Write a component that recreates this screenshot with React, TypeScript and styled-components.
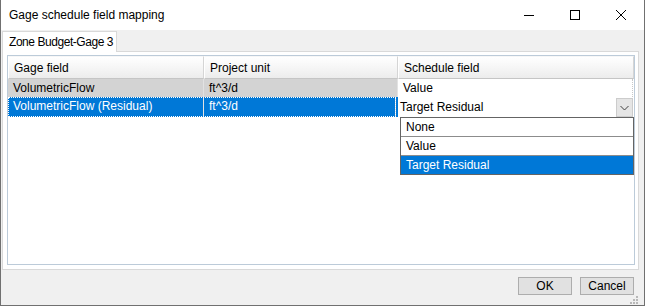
import styled, { createGlobalStyle } from "styled-components";

const GlobalStyle = createGlobalStyle`
  html, body {
    margin: 0;
    padding: 0;
    background: #ffffff;
  }
  * {
    box-sizing: border-box;
  }
`;

const Window = styled.div`
  position: relative;
  width: 645px;
  height: 306px;
  display: flex;
  flex-direction: column;
  border: 1px solid #707070;
  border-top: none;
  background: #f0f0f0;
  font-family: "Liberation Sans", Arial, sans-serif;
  font-size: 12px;
  color: #000;
`;

const TitleBar = styled.div`
  height: 30px;
  display: flex;
  align-items: center;
  background: #ffffff;
`;

const Title = styled.div`
  flex: 1;
  padding-left: 8px;
  padding-bottom: 1px;
`;

const CaptionButton = styled.div`
  width: 46px;
  height: 30px;
  display: flex;
  align-items: center;
  justify-content: center;
`;

const Body = styled.div`
  flex: 1;
  display: flex;
  flex-direction: column;
  padding: 1px 5px 0 1px;
`;

const TabStrip = styled.div`
  height: 20px;
  display: flex;
`;

const Tab = styled.div`
  width: 115px;
  height: 21px;
  padding: 3px 0 0 6px;
  background: #ffffff;
  border: 1px solid #d9d9d9;
  border-bottom: none;
  position: relative;
  z-index: 1;
  white-space: nowrap;
  letter-spacing: -0.45px;
`;

const TabPage = styled.div`
  height: 219px;
  background: #ffffff;
  border: 1px solid #d9d9d9;
  padding: 3px 3px 4px 4px;
`;

const Grid = styled.div`
  position: relative;
  width: 628px;
  height: 210px;
  border: 1px solid #bccbd9;
  background: #ffffff;
`;

const Row = styled.div<{ $height: number }>`
  display: flex;
  height: ${(p) => p.$height}px;
`;

const HeaderCell = styled.div<{ $width: number }>`
  width: ${(p) => p.$width}px;
  padding: 4px 0 0 5px;
  background: linear-gradient(#ffffff, #f4f4f4 60%, #ececec);
  border-top: 1px solid #f7f7f7;
  border-right: 1px solid #d5d5d5;
  border-bottom: 1px solid #c5c5c5;
  border-left: 1px solid #ffffff;
  white-space: nowrap;
`;

const Cell = styled.div<{ $width: number; $tone: "gray" | "blue" | "white" }>`
  width: ${(p) => p.$width}px;
  padding: 2px 0 0 5px;
  white-space: nowrap;
  background: ${(p) =>
    p.$tone === "gray" ? "#d3d3d3" : p.$tone === "blue" ? "#0078d7" : "#ffffff"};
  color: ${(p) => (p.$tone === "blue" ? "#ffffff" : "#000000")};
  border-right: 1px ${(p) => (p.$tone === "white" ? "dotted #c8c8c8" : "solid #e2e2e2")};
`;

const FocusRow = styled.div`
  display: flex;
  outline: 1px dotted #ffffff;
  outline-offset: -1px;
  background: #0078d7;
`;

const Combo = styled.div`
  width: 237px;
  display: flex;
  align-items: stretch;
  background: #ffffff;
  border-left: 2px solid #0078d7;
  padding: 1px 0 0 0;
`;

const ComboText = styled.div`
  flex: 1;
  padding: 2px 0 0 2px;
`;

const DropButton = styled.div`
  width: 17px;
  display: flex;
  align-items: center;
  justify-content: center;
  background: #e5e5e5;
  border: 1px solid #cccccc;
`;

const DropList = styled.div`
  position: absolute;
  left: 392px;
  top: 61px;
  width: 234px;
  border: 1px solid #646464;
  background: #ffffff;
`;

const DropItem = styled.div<{ $selected?: boolean; $last?: boolean }>`
  height: ${(p) => (p.$last ? 18 : 19)}px;
  padding: 2px 0 0 5px;
  background: ${(p) => (p.$selected ? "#0078d7" : "#ffffff")};
  color: ${(p) => (p.$selected ? "#ffffff" : "#000000")};
  border-bottom: ${(p) => (p.$last ? "none" : "1px solid #8c8c8c")};
`;

const Footer = styled.div`
  flex: 1;
  display: flex;
  justify-content: flex-end;
  align-items: flex-start;
  gap: 8px;
  padding: 7px 5px 0 0;
  position: relative;
`;

const Button = styled.button`
  width: 54px;
  height: 18px;
  padding: 0;
  font-family: inherit;
  font-size: 12px;
  color: #000;
  background: #e1e1e1;
  border: 1px solid #adadad;
`;

const Grip = styled.svg`
  position: absolute;
  right: 1px;
  bottom: 1px;
`;

const columns = [196, 194, 236];

export default function App() {
  return (
    <>
      <GlobalStyle />
      <Window>
        <TitleBar>
          <Title>Gage schedule field mapping</Title>
          <CaptionButton>
            <svg width="10" height="10" viewBox="0 0 10 10">
              <path d="M0 5.5h10" stroke="#000" strokeWidth="1" />
            </svg>
          </CaptionButton>
          <CaptionButton>
            <svg width="10" height="10" viewBox="0 0 10 10">
              <rect x="0.5" y="0.5" width="9" height="9" fill="none" stroke="#000" />
            </svg>
          </CaptionButton>
          <CaptionButton>
            <svg width="10" height="10" viewBox="0 0 10 10">
              <path d="M0 0L10 10M10 0L0 10" stroke="#000" strokeWidth="1" />
            </svg>
          </CaptionButton>
        </TitleBar>
        <Body>
          <TabStrip>
            <Tab>Zone Budget-Gage 3</Tab>
          </TabStrip>
          <TabPage>
            <Grid>
              <Row $height={23}>
                <HeaderCell $width={columns[0]}>Gage field</HeaderCell>
                <HeaderCell $width={columns[1]}>Project unit</HeaderCell>
                <HeaderCell $width={columns[2]}>Schedule field</HeaderCell>
              </Row>
              <Row $height={18}>
                <Cell $width={columns[0]} $tone="gray">VolumetricFlow</Cell>
                <Cell $width={columns[1]} $tone="gray">ft^3/d</Cell>
                <Cell $width={columns[2] - 1} $tone="white">Value</Cell>
              </Row>
              <Row $height={20}>
                <FocusRow>
                  <Cell $width={columns[0]} $tone="blue">VolumetricFlow (Residual)</Cell>
                  <Cell $width={columns[1] - 2} $tone="blue">ft^3/d</Cell>
                </FocusRow>
                <Combo>
                  <ComboText>Target Residual</ComboText>
                  <DropButton>
                    <svg width="9" height="6" viewBox="0 0 9 6">
                      <path d="M0.5 1L4.5 5L8.5 1" fill="none" stroke="#404040" strokeWidth="1" />
                    </svg>
                  </DropButton>
                </Combo>
              </Row>
              <DropList>
                <DropItem>None</DropItem>
                <DropItem>Value</DropItem>
                <DropItem $selected $last>
                  Target Residual
                </DropItem>
              </DropList>
            </Grid>
          </TabPage>
          <Footer>
            <Button>OK</Button>
            <Button>Cancel</Button>
            <Grip width="9" height="9" viewBox="0 0 9 9">
              {[
                [7, 1],
                [4, 4],
                [7, 4],
                [1, 7],
                [4, 7],
                [7, 7],
              ].map(([x, y]) => (
                <rect key={`${x}-${y}`} x={x} y={y} width="2" height="2" fill="#b8b8b8" />
              ))}
            </Grip>
          </Footer>
        </Body>
      </Window>
    </>
  );
}
